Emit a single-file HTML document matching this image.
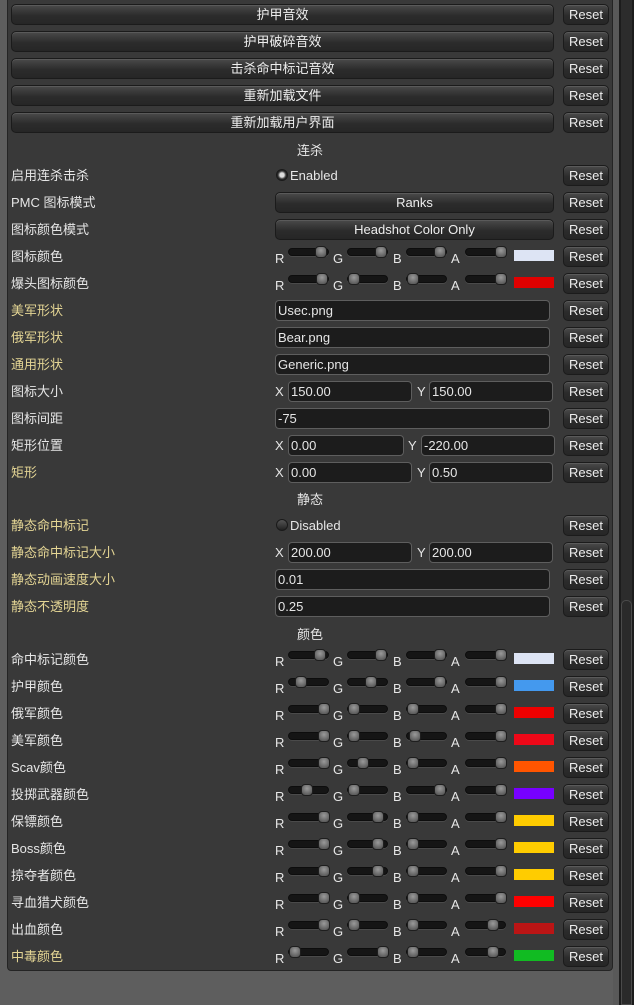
<!DOCTYPE html>
<html><head><meta charset="utf-8"><style>
*{margin:0;padding:0;box-sizing:border-box}
body{width:634px;height:1005px;background:#5e5e5e;position:relative;overflow:hidden;font-family:"Liberation Sans","Noto Sans CJK SC",sans-serif;font-size:13px;color:#e6e6e6}
.panel{position:absolute;left:7px;top:-10px;width:606px;height:981px;background:#393939;border:1px solid #242424;border-radius:4px}
.sb{position:absolute;left:613px;top:0;width:21px;height:1005px;background:#595959}
.sb i{position:absolute;left:6px;top:0;width:15px;height:1005px;background:#2c2c2c;border-left:2px solid #1c1c1c;border-right:2px solid #1c1c1c}
.sb b{position:absolute;left:8px;top:600px;width:11px;height:405px;background:#2a2a2a;border:1px solid #4a4a4a;border-radius:5px 5px 0 0}
.r{position:absolute;left:0;width:613px;height:27px}
.btn{position:absolute;height:21px;top:3px;border:1px solid #1b1b1b;border-radius:5px;background:linear-gradient(#4a4a4a,#2c2c2c 55%,#262626);color:#eee;text-align:center;line-height:19px;box-shadow:inset 0 1px 0 #5a5a5a}
.rs{left:563px;width:46px}
.wide{left:11px;width:543px}
.val{left:275px;width:279px}
.lb{position:absolute;left:11px;top:5px;line-height:17px}
.y{color:#e4d594}
.h{position:absolute;left:0;width:620px;text-align:center;line-height:17px}
.tf{position:absolute;top:3px;height:21px;background:#1c1c1c;border:1px solid #5e5e5e;border-radius:4px;line-height:19px;padding-left:2px;color:#e6e6e6}
.t{position:absolute;top:5px;line-height:17px}
.sl{position:absolute;top:5px;width:41px;height:8px;background:#151515;border:1px solid #0d0d0d;border-radius:4px;box-shadow:0 1px 0 #4a4a4a}
.th{position:absolute;top:-3px;width:12px;height:12px;background:radial-gradient(circle at 50% 35%,#9a9a9a,#6a6a6a 60%,#4a4a4a);border:1px solid #1e1e1e;border-radius:4px}
.sw{position:absolute;left:514px;top:7px;width:40px;height:11px}
.tg{position:absolute;left:276px;top:7px;width:12px;height:12px;border-radius:6px;border:1px solid #1a1a1a;background:#2a2a2a}
</style></head><body>
<div class="panel"></div>
<div class="sb"><i></i><b></b></div>

<div class="r" style="top:1px"><div class="btn wide">护甲音效</div><div class="btn rs">Reset</div></div>
<div class="r" style="top:28px"><div class="btn wide">护甲破碎音效</div><div class="btn rs">Reset</div></div>
<div class="r" style="top:55px"><div class="btn wide">击杀命中标记音效</div><div class="btn rs">Reset</div></div>
<div class="r" style="top:82px"><div class="btn wide">重新加载文件</div><div class="btn rs">Reset</div></div>
<div class="r" style="top:109px"><div class="btn wide">重新加载用户界面</div><div class="btn rs">Reset</div></div>

<div class="h" style="top:142px">连杀</div>
<div class="r" style="top:162px"><div class="lb">启用连杀击杀</div><div class="tg" style="background:radial-gradient(circle,#ddd 30%,#777 45%,#2a2a2a 60%)"></div><div class="t" style="left:290px">Enabled</div><div class="btn rs">Reset</div></div>
<div class="r" style="top:189px"><div class="lb">PMC 图标模式</div><div class="btn val">Ranks</div><div class="btn rs">Reset</div></div>
<div class="r" style="top:216px"><div class="lb">图标颜色模式</div><div class="btn val">Headshot Color Only</div><div class="btn rs">Reset</div></div>

<div class="r" style="top:243px"><div class="lb">图标颜色</div>
<div class="t" style="left:275px;top:7px">R</div><div class="sl" style="left:288px"><div class="th" style="left:26px"></div></div>
<div class="t" style="left:333px;top:7px">G</div><div class="sl" style="left:347px"><div class="th" style="left:27px"></div></div>
<div class="t" style="left:393px;top:7px">B</div><div class="sl" style="left:406px"><div class="th" style="left:27px"></div></div>
<div class="t" style="left:451px;top:7px">A</div><div class="sl" style="left:465px"><div class="th" style="left:29px"></div></div>
<div class="sw" style="background:#dde4f4"></div><div class="btn rs">Reset</div></div>
<div class="r" style="top:270px"><div class="lb">爆头图标颜色</div>
<div class="t" style="left:275px;top:7px">R</div><div class="sl" style="left:288px"><div class="th" style="left:27px"></div></div>
<div class="t" style="left:333px;top:7px">G</div><div class="sl" style="left:347px"><div class="th" style="left:0px"></div></div>
<div class="t" style="left:393px;top:7px">B</div><div class="sl" style="left:406px"><div class="th" style="left:0px"></div></div>
<div class="t" style="left:451px;top:7px">A</div><div class="sl" style="left:465px"><div class="th" style="left:29px"></div></div>
<div class="sw" style="background:#e00000"></div><div class="btn rs">Reset</div></div>

<div class="r" style="top:297px"><div class="lb y">美军形状</div><div class="tf" style="left:275px;width:275px">Usec.png</div><div class="btn rs">Reset</div></div>
<div class="r" style="top:324px"><div class="lb y">俄军形状</div><div class="tf" style="left:275px;width:275px">Bear.png</div><div class="btn rs">Reset</div></div>
<div class="r" style="top:351px"><div class="lb y">通用形状</div><div class="tf" style="left:275px;width:275px">Generic.png</div><div class="btn rs">Reset</div></div>
<div class="r" style="top:378px"><div class="lb">图标大小</div><div class="t" style="left:275px">X</div><div class="tf" style="left:288px;width:124px">150.00</div><div class="t" style="left:417px">Y</div><div class="tf" style="left:429px;width:124px">150.00</div><div class="btn rs">Reset</div></div>
<div class="r" style="top:405px"><div class="lb">图标间距</div><div class="tf" style="left:275px;width:275px">-75</div><div class="btn rs">Reset</div></div>
<div class="r" style="top:432px"><div class="lb">矩形位置</div><div class="t" style="left:275px">X</div><div class="tf" style="left:288px;width:116px">0.00</div><div class="t" style="left:408px">Y</div><div class="tf" style="left:421px;width:134px">-220.00</div><div class="btn rs">Reset</div></div>
<div class="r" style="top:459px"><div class="lb y">矩形</div><div class="t" style="left:275px">X</div><div class="tf" style="left:288px;width:124px">0.00</div><div class="t" style="left:417px">Y</div><div class="tf" style="left:429px;width:124px">0.50</div><div class="btn rs">Reset</div></div>

<div class="h" style="top:491px">静态</div>
<div class="r" style="top:512px"><div class="lb y">静态命中标记</div><div class="tg" style="background:linear-gradient(#555,#222)"></div><div class="t" style="left:290px">Disabled</div><div class="btn rs">Reset</div></div>
<div class="r" style="top:539px"><div class="lb y">静态命中标记大小</div><div class="t" style="left:275px">X</div><div class="tf" style="left:288px;width:124px">200.00</div><div class="t" style="left:417px">Y</div><div class="tf" style="left:429px;width:124px">200.00</div><div class="btn rs">Reset</div></div>
<div class="r" style="top:566px"><div class="lb y">静态动画速度大小</div><div class="tf" style="left:275px;width:275px">0.01</div><div class="btn rs">Reset</div></div>
<div class="r" style="top:593px"><div class="lb y">静态不透明度</div><div class="tf" style="left:275px;width:275px">0.25</div><div class="btn rs">Reset</div></div>

<div class="h" style="top:626px">颜色</div>

<div class="r" style="top:646px"><div class="lb">命中标记颜色</div>
<div class="t" style="left:275px;top:7px">R</div><div class="sl" style="left:288px"><div class="th" style="left:25px"></div></div>
<div class="t" style="left:333px;top:7px">G</div><div class="sl" style="left:347px"><div class="th" style="left:27px"></div></div>
<div class="t" style="left:393px;top:7px">B</div><div class="sl" style="left:406px"><div class="th" style="left:27px"></div></div>
<div class="t" style="left:451px;top:7px">A</div><div class="sl" style="left:465px"><div class="th" style="left:29px"></div></div>
<div class="sw" style="background:#dde4f4"></div><div class="btn rs">Reset</div></div>
<div class="r" style="top:673px"><div class="lb">护甲颜色</div>
<div class="t" style="left:275px;top:7px">R</div><div class="sl" style="left:288px"><div class="th" style="left:6px"></div></div>
<div class="t" style="left:333px;top:7px">G</div><div class="sl" style="left:347px"><div class="th" style="left:17px"></div></div>
<div class="t" style="left:393px;top:7px">B</div><div class="sl" style="left:406px"><div class="th" style="left:27px"></div></div>
<div class="t" style="left:451px;top:7px">A</div><div class="sl" style="left:465px"><div class="th" style="left:29px"></div></div>
<div class="sw" style="background:#4499ee"></div><div class="btn rs">Reset</div></div>
<div class="r" style="top:700px"><div class="lb">俄军颜色</div>
<div class="t" style="left:275px;top:7px">R</div><div class="sl" style="left:288px"><div class="th" style="left:29px"></div></div>
<div class="t" style="left:333px;top:7px">G</div><div class="sl" style="left:347px"><div class="th" style="left:0px"></div></div>
<div class="t" style="left:393px;top:7px">B</div><div class="sl" style="left:406px"><div class="th" style="left:0px"></div></div>
<div class="t" style="left:451px;top:7px">A</div><div class="sl" style="left:465px"><div class="th" style="left:29px"></div></div>
<div class="sw" style="background:#ee0000"></div><div class="btn rs">Reset</div></div>
<div class="r" style="top:727px"><div class="lb">美军颜色</div>
<div class="t" style="left:275px;top:7px">R</div><div class="sl" style="left:288px"><div class="th" style="left:29px"></div></div>
<div class="t" style="left:333px;top:7px">G</div><div class="sl" style="left:347px"><div class="th" style="left:0px"></div></div>
<div class="t" style="left:393px;top:7px">B</div><div class="sl" style="left:406px"><div class="th" style="left:2px"></div></div>
<div class="t" style="left:451px;top:7px">A</div><div class="sl" style="left:465px"><div class="th" style="left:29px"></div></div>
<div class="sw" style="background:#ee0818"></div><div class="btn rs">Reset</div></div>
<div class="r" style="top:754px"><div class="lb">Scav颜色</div>
<div class="t" style="left:275px;top:7px">R</div><div class="sl" style="left:288px"><div class="th" style="left:29px"></div></div>
<div class="t" style="left:333px;top:7px">G</div><div class="sl" style="left:347px"><div class="th" style="left:9px"></div></div>
<div class="t" style="left:393px;top:7px">B</div><div class="sl" style="left:406px"><div class="th" style="left:0px"></div></div>
<div class="t" style="left:451px;top:7px">A</div><div class="sl" style="left:465px"><div class="th" style="left:29px"></div></div>
<div class="sw" style="background:#ff5500"></div><div class="btn rs">Reset</div></div>
<div class="r" style="top:781px"><div class="lb">投掷武器颜色</div>
<div class="t" style="left:275px;top:7px">R</div><div class="sl" style="left:288px"><div class="th" style="left:12px"></div></div>
<div class="t" style="left:333px;top:7px">G</div><div class="sl" style="left:347px"><div class="th" style="left:0px"></div></div>
<div class="t" style="left:393px;top:7px">B</div><div class="sl" style="left:406px"><div class="th" style="left:27px"></div></div>
<div class="t" style="left:451px;top:7px">A</div><div class="sl" style="left:465px"><div class="th" style="left:29px"></div></div>
<div class="sw" style="background:#7700ff"></div><div class="btn rs">Reset</div></div>
<div class="r" style="top:808px"><div class="lb">保镖颜色</div>
<div class="t" style="left:275px;top:7px">R</div><div class="sl" style="left:288px"><div class="th" style="left:29px"></div></div>
<div class="t" style="left:333px;top:7px">G</div><div class="sl" style="left:347px"><div class="th" style="left:24px"></div></div>
<div class="t" style="left:393px;top:7px">B</div><div class="sl" style="left:406px"><div class="th" style="left:0px"></div></div>
<div class="t" style="left:451px;top:7px">A</div><div class="sl" style="left:465px"><div class="th" style="left:29px"></div></div>
<div class="sw" style="background:#ffcc00"></div><div class="btn rs">Reset</div></div>
<div class="r" style="top:835px"><div class="lb">Boss颜色</div>
<div class="t" style="left:275px;top:7px">R</div><div class="sl" style="left:288px"><div class="th" style="left:29px"></div></div>
<div class="t" style="left:333px;top:7px">G</div><div class="sl" style="left:347px"><div class="th" style="left:24px"></div></div>
<div class="t" style="left:393px;top:7px">B</div><div class="sl" style="left:406px"><div class="th" style="left:0px"></div></div>
<div class="t" style="left:451px;top:7px">A</div><div class="sl" style="left:465px"><div class="th" style="left:29px"></div></div>
<div class="sw" style="background:#ffcc00"></div><div class="btn rs">Reset</div></div>
<div class="r" style="top:862px"><div class="lb">掠夺者颜色</div>
<div class="t" style="left:275px;top:7px">R</div><div class="sl" style="left:288px"><div class="th" style="left:29px"></div></div>
<div class="t" style="left:333px;top:7px">G</div><div class="sl" style="left:347px"><div class="th" style="left:24px"></div></div>
<div class="t" style="left:393px;top:7px">B</div><div class="sl" style="left:406px"><div class="th" style="left:0px"></div></div>
<div class="t" style="left:451px;top:7px">A</div><div class="sl" style="left:465px"><div class="th" style="left:29px"></div></div>
<div class="sw" style="background:#ffcc00"></div><div class="btn rs">Reset</div></div>
<div class="r" style="top:889px"><div class="lb">寻血猎犬颜色</div>
<div class="t" style="left:275px;top:7px">R</div><div class="sl" style="left:288px"><div class="th" style="left:29px"></div></div>
<div class="t" style="left:333px;top:7px">G</div><div class="sl" style="left:347px"><div class="th" style="left:0px"></div></div>
<div class="t" style="left:393px;top:7px">B</div><div class="sl" style="left:406px"><div class="th" style="left:0px"></div></div>
<div class="t" style="left:451px;top:7px">A</div><div class="sl" style="left:465px"><div class="th" style="left:29px"></div></div>
<div class="sw" style="background:#ff0000"></div><div class="btn rs">Reset</div></div>
<div class="r" style="top:916px"><div class="lb">出血颜色</div>
<div class="t" style="left:275px;top:7px">R</div><div class="sl" style="left:288px"><div class="th" style="left:29px"></div></div>
<div class="t" style="left:333px;top:7px">G</div><div class="sl" style="left:347px"><div class="th" style="left:0px"></div></div>
<div class="t" style="left:393px;top:7px">B</div><div class="sl" style="left:406px"><div class="th" style="left:0px"></div></div>
<div class="t" style="left:451px;top:7px">A</div><div class="sl" style="left:465px"><div class="th" style="left:21px"></div></div>
<div class="sw" style="background:#bb1515"></div><div class="btn rs">Reset</div></div>
<div class="r" style="top:943px"><div class="lb y">中毒颜色</div>
<div class="t" style="left:275px;top:7px">R</div><div class="sl" style="left:288px"><div class="th" style="left:0px"></div></div>
<div class="t" style="left:333px;top:7px">G</div><div class="sl" style="left:347px"><div class="th" style="left:29px"></div></div>
<div class="t" style="left:393px;top:7px">B</div><div class="sl" style="left:406px"><div class="th" style="left:0px"></div></div>
<div class="t" style="left:451px;top:7px">A</div><div class="sl" style="left:465px"><div class="th" style="left:21px"></div></div>
<div class="sw" style="background:#11bb22"></div><div class="btn rs">Reset</div></div>
</body></html>
